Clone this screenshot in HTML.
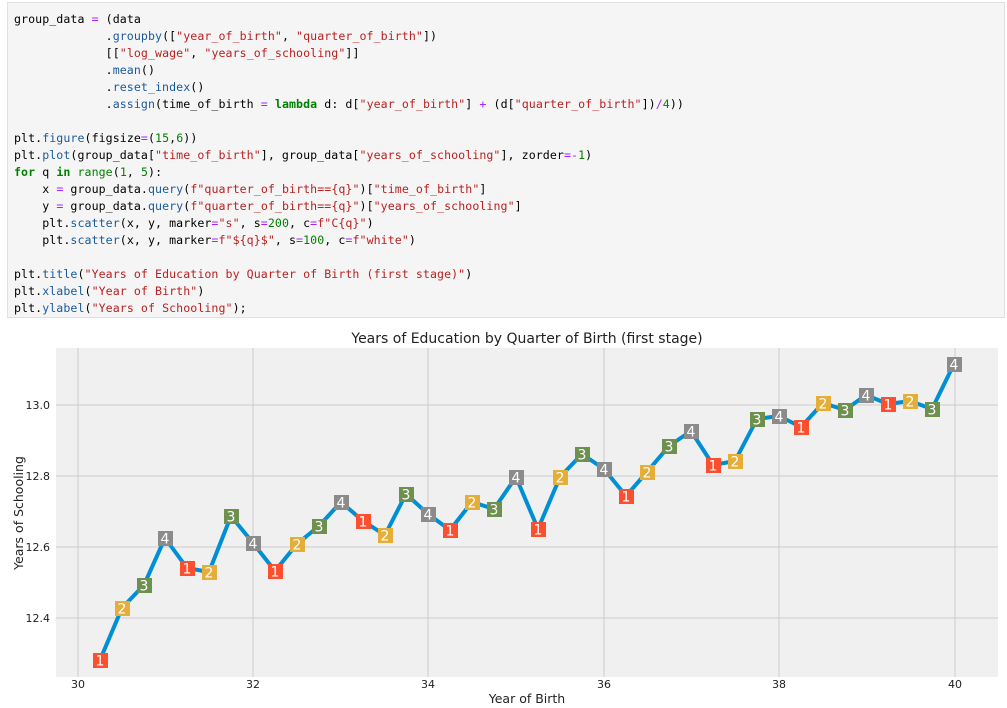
<!DOCTYPE html>
<html><head><meta charset="utf-8"><style>
body{margin:0;width:1007px;height:708px;background:#fff;overflow:hidden;position:relative}
.code{position:absolute;left:7px;top:2px;width:998px;height:316px;background:#f5f5f5;border:1px solid #e0e0e0;box-sizing:border-box}
pre{margin:0;position:absolute;left:6px;top:8px;font-family:"DejaVu Sans Mono","Liberation Mono",monospace;font-size:11.6px;letter-spacing:0.07px;line-height:17px;color:#000}
.s{color:#ba2121}.n{color:#008000}.o{color:#aa22ff}.k{color:#008000;font-weight:bold}.m{color:#1a5a9a}.b{color:#008000}
svg{position:absolute;left:0;top:0}
</style></head><body>
<div class="code"><pre>group_data <span class="o">=</span> (data
             .<span class="m">groupby</span>([<span class="s">"year_of_birth"</span>, <span class="s">"quarter_of_birth"</span>])
             [[<span class="s">"log_wage"</span>, <span class="s">"years_of_schooling"</span>]]
             .<span class="m">mean</span>()
             .<span class="m">reset_index</span>()
             .<span class="m">assign</span>(time_of_birth <span class="o">=</span> <span class="k">lambda</span> d: d[<span class="s">"year_of_birth"</span>] <span class="o">+</span> (d[<span class="s">"quarter_of_birth"</span>])<span class="o">/</span><span class="n">4</span>))

plt.<span class="m">figure</span>(figsize<span class="o">=</span>(<span class="n">15</span>,<span class="n">6</span>))
plt.<span class="m">plot</span>(group_data[<span class="s">"time_of_birth"</span>], group_data[<span class="s">"years_of_schooling"</span>], zorder<span class="o">=-</span><span class="n">1</span>)
<span class="k">for</span> q <span class="k">in</span> <span class="b">range</span>(<span class="n">1</span>, <span class="n">5</span>):
    x <span class="o">=</span> group_data.<span class="m">query</span>(<span class="s">f"quarter_of_birth=={q}"</span>)[<span class="s">"time_of_birth"</span>]
    y <span class="o">=</span> group_data.<span class="m">query</span>(<span class="s">f"quarter_of_birth=={q}"</span>)[<span class="s">"years_of_schooling"</span>]
    plt.<span class="m">scatter</span>(x, y, marker<span class="o">=</span><span class="s">"s"</span>, s<span class="o">=</span><span class="n">200</span>, c<span class="o">=</span><span class="s">f"C{q}"</span>)
    plt.<span class="m">scatter</span>(x, y, marker<span class="o">=</span><span class="s">f"${q}$"</span>, s<span class="o">=</span><span class="n">100</span>, c<span class="o">=</span><span class="s">f"white"</span>)

plt.<span class="m">title</span>(<span class="s">"Years of Education by Quarter of Birth (first stage)"</span>)
plt.<span class="m">xlabel</span>(<span class="s">"Year of Birth"</span>)
plt.<span class="m">ylabel</span>(<span class="s">"Years of Schooling"</span>);</pre></div>
<svg width="1007" height="708" font-family="DejaVu Sans, Liberation Sans, sans-serif">
<text x="527" y="343" font-size="14" text-anchor="middle" fill="#222">Years of Education by Quarter of Birth (first stage)</text>
<rect x="56" y="348" width="942" height="329" fill="#f0f0f0"/>
<g stroke="#cbcbcb" stroke-width="1">
<line x1="78" y1="348" x2="78" y2="677"/><line x1="253" y1="348" x2="253" y2="677"/><line x1="428" y1="348" x2="428" y2="677"/><line x1="604" y1="348" x2="604" y2="677"/><line x1="779" y1="348" x2="779" y2="677"/><line x1="955" y1="348" x2="955" y2="677"/>
<line x1="56" y1="405" x2="998" y2="405"/><line x1="56" y1="476" x2="998" y2="476"/><line x1="56" y1="547" x2="998" y2="547"/><line x1="56" y1="618" x2="998" y2="618"/>
</g>
<g font-size="11" fill="#222" text-anchor="middle">
<text x="78" y="688">30</text><text x="253" y="688">32</text><text x="428" y="688">34</text><text x="604" y="688">36</text><text x="779" y="688">38</text><text x="955" y="688">40</text>
</g>
<g font-size="11" fill="#222" text-anchor="end">
<text x="50" y="409">13.0</text><text x="50" y="480">12.8</text><text x="50" y="551">12.6</text><text x="50" y="622">12.4</text>
</g>
<text x="527" y="703" font-size="12.5" text-anchor="middle" fill="#222">Year of Birth</text>
<text transform="translate(23,513) rotate(-90)" font-size="12.5" text-anchor="middle" fill="#222">Years of Schooling</text>
<polyline fill="none" stroke="#008fd5" stroke-width="4" stroke-linejoin="round" points="100,660 122,608 144,585 165,538 187,568 209,572 231,516 253,543 275,571 297,544 319,526 341,502 363,521 385,535 406,494 428,514 450,530 472,502 494,509 516,477 538,529 560,477 582,454 604,469 626,496 647,472 669,446 691,431 713,465 735,461 757,419 779,416 801,427 823,403 845,410 866,395 888,404 910,401 932,409 954,364"/>
<g text-anchor="middle" font-size="14" fill="#fff">
<rect x="93" y="653" width="15" height="15" fill="#fc4f30"/><text x="100" y="665.5">1</text>
<rect x="115" y="601" width="15" height="15" fill="#e5ae38"/><text x="122" y="613.5">2</text>
<rect x="137" y="578" width="15" height="15" fill="#6d904f"/><text x="144" y="590.5">3</text>
<rect x="158" y="531" width="15" height="15" fill="#8b8b8b"/><text x="165" y="543.5">4</text>
<rect x="180" y="561" width="15" height="15" fill="#fc4f30"/><text x="187" y="573.5">1</text>
<rect x="202" y="565" width="15" height="15" fill="#e5ae38"/><text x="209" y="577.5">2</text>
<rect x="224" y="509" width="15" height="15" fill="#6d904f"/><text x="231" y="521.5">3</text>
<rect x="246" y="536" width="15" height="15" fill="#8b8b8b"/><text x="253" y="548.5">4</text>
<rect x="268" y="564" width="15" height="15" fill="#fc4f30"/><text x="275" y="576.5">1</text>
<rect x="290" y="537" width="15" height="15" fill="#e5ae38"/><text x="297" y="549.5">2</text>
<rect x="312" y="519" width="15" height="15" fill="#6d904f"/><text x="319" y="531.5">3</text>
<rect x="334" y="495" width="15" height="15" fill="#8b8b8b"/><text x="341" y="507.5">4</text>
<rect x="356" y="514" width="15" height="15" fill="#fc4f30"/><text x="363" y="526.5">1</text>
<rect x="378" y="528" width="15" height="15" fill="#e5ae38"/><text x="385" y="540.5">2</text>
<rect x="399" y="487" width="15" height="15" fill="#6d904f"/><text x="406" y="499.5">3</text>
<rect x="421" y="507" width="15" height="15" fill="#8b8b8b"/><text x="428" y="519.5">4</text>
<rect x="443" y="523" width="15" height="15" fill="#fc4f30"/><text x="450" y="535.5">1</text>
<rect x="465" y="495" width="15" height="15" fill="#e5ae38"/><text x="472" y="507.5">2</text>
<rect x="487" y="502" width="15" height="15" fill="#6d904f"/><text x="494" y="514.5">3</text>
<rect x="509" y="470" width="15" height="15" fill="#8b8b8b"/><text x="516" y="482.5">4</text>
<rect x="531" y="522" width="15" height="15" fill="#fc4f30"/><text x="538" y="534.5">1</text>
<rect x="553" y="470" width="15" height="15" fill="#e5ae38"/><text x="560" y="482.5">2</text>
<rect x="575" y="447" width="15" height="15" fill="#6d904f"/><text x="582" y="459.5">3</text>
<rect x="597" y="462" width="15" height="15" fill="#8b8b8b"/><text x="604" y="474.5">4</text>
<rect x="619" y="489" width="15" height="15" fill="#fc4f30"/><text x="626" y="501.5">1</text>
<rect x="640" y="465" width="15" height="15" fill="#e5ae38"/><text x="647" y="477.5">2</text>
<rect x="662" y="439" width="15" height="15" fill="#6d904f"/><text x="669" y="451.5">3</text>
<rect x="684" y="424" width="15" height="15" fill="#8b8b8b"/><text x="691" y="436.5">4</text>
<rect x="706" y="458" width="15" height="15" fill="#fc4f30"/><text x="713" y="470.5">1</text>
<rect x="728" y="454" width="15" height="15" fill="#e5ae38"/><text x="735" y="466.5">2</text>
<rect x="750" y="412" width="15" height="15" fill="#6d904f"/><text x="757" y="424.5">3</text>
<rect x="772" y="409" width="15" height="15" fill="#8b8b8b"/><text x="779" y="421.5">4</text>
<rect x="794" y="420" width="15" height="15" fill="#fc4f30"/><text x="801" y="432.5">1</text>
<rect x="816" y="396" width="15" height="15" fill="#e5ae38"/><text x="823" y="408.5">2</text>
<rect x="838" y="403" width="15" height="15" fill="#6d904f"/><text x="845" y="415.5">3</text>
<rect x="859" y="388" width="15" height="15" fill="#8b8b8b"/><text x="866" y="400.5">4</text>
<rect x="881" y="397" width="15" height="15" fill="#fc4f30"/><text x="888" y="409.5">1</text>
<rect x="903" y="394" width="15" height="15" fill="#e5ae38"/><text x="910" y="406.5">2</text>
<rect x="925" y="402" width="15" height="15" fill="#6d904f"/><text x="932" y="414.5">3</text>
<rect x="947" y="357" width="15" height="15" fill="#8b8b8b"/><text x="954" y="369.5">4</text>
</g>
</svg>
</body></html>
